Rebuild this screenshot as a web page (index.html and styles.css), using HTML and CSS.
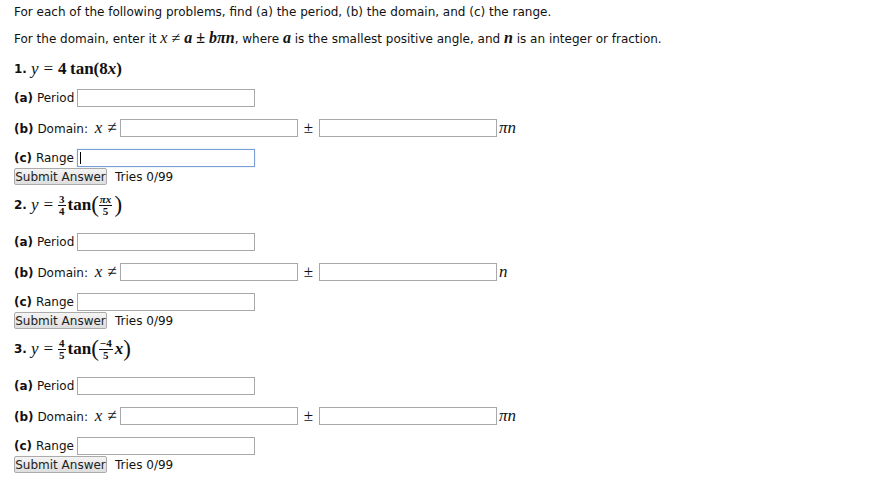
FILE: index.html
```html
<!DOCTYPE html>
<html>
<head>
  <title>Tangent Problems</title>
  <link rel="stylesheet" href="styles.css">
</head>
<body>
  <div class="page">
    <p class="intro">For each of the following problems, find (a) the period, (b) the domain, and (c) the range.</p>
    <p class="intro second">For the domain, enter it <span class="m"><i>x</i> &ne; <b><i>a</i> &plusmn; <i>b&pi;n</i></b></span>, where <span class="m"><b><i>a</i></b></span> is the smallest positive angle, and <span class="m"><b><i>n</i></b></span> is an integer or fraction.</p>

    <div class="problem">
      <div class="header first">
        <b class="num">1.</b>
        <span class="m"><i>y</i><span class="eq">=</span><b>4&thinsp;tan(8<i>x</i>)</b></span>
      </div>
      <div class="row">
        <span class="label"><b>(a)</b> Period</span>
        <input type="text" class="answer">
      </div>
      <div class="row">
        <span class="label"><b>(b)</b> Domain: <span class="m"><i>x</i><span class="ne">&ne;</span></span></span>
        <input type="text" class="answer">
        <span class="m pm">&plusmn;</span>
        <input type="text" class="answer">
        <span class="m unit"><i>&pi;n</i></span>
      </div>
      <div class="row">
        <span class="label"><b>(c)</b> Range</span>
        <input type="text" class="answer focused">
      </div>
      <div class="row submit-row">
        <button class="submit-btn">Submit Answer</button>
        <span class="tries">Tries 0/99</span>
      </div>
    </div>

    <div class="problem">
      <div class="header">
        <b class="num">2.</b>
        <span class="m"><i>y</i><span class="eq">=</span><b class="frac"><span>3</span><span>4</span></b><b>tan</b><span class="paren">(</span><b class="frac"><span><i>&pi;x</i></span><span>5</span></b><span class="paren">)</span></span>
      </div>
      <div class="row">
        <span class="label"><b>(a)</b> Period</span>
        <input type="text" class="answer">
      </div>
      <div class="row">
        <span class="label"><b>(b)</b> Domain: <span class="m"><i>x</i><span class="ne">&ne;</span></span></span>
        <input type="text" class="answer">
        <span class="m pm">&plusmn;</span>
        <input type="text" class="answer">
        <span class="m unit"><i>n</i></span>
      </div>
      <div class="row">
        <span class="label"><b>(c)</b> Range</span>
        <input type="text" class="answer">
      </div>
      <div class="row submit-row">
        <button class="submit-btn">Submit Answer</button>
        <span class="tries">Tries 0/99</span>
      </div>
    </div>

    <div class="problem">
      <div class="header">
        <b class="num">3.</b>
        <span class="m"><i>y</i><span class="eq">=</span><b class="frac"><span>4</span><span>5</span></b><b>tan</b><span class="paren">(</span><b class="frac"><span>&minus;4</span><span>5</span></b><b><i>x</i></b><span class="paren">)</span></span>
      </div>
      <div class="row">
        <span class="label"><b>(a)</b> Period</span>
        <input type="text" class="answer">
      </div>
      <div class="row">
        <span class="label"><b>(b)</b> Domain: <span class="m"><i>x</i><span class="ne">&ne;</span></span></span>
        <input type="text" class="answer">
        <span class="m pm">&plusmn;</span>
        <input type="text" class="answer">
        <span class="m unit"><i>&pi;n</i></span>
      </div>
      <div class="row">
        <span class="label"><b>(c)</b> Range</span>
        <input type="text" class="answer">
      </div>
      <div class="row submit-row">
        <button class="submit-btn">Submit Answer</button>
        <span class="tries">Tries 0/99</span>
      </div>
    </div>
  </div>
</body>
</html>
```

FILE: styles.css
```css
body {
  margin: 0;
  padding: 0;
  background-color: #fff;
  color: #111;
  font-family: "DejaVu Sans", Verdana, sans-serif;
  font-size: 12px;
}

.page {
  padding: 0 14px;
}

.intro {
  margin: 4px 0 0;
  line-height: 16px;
  white-space: nowrap;
}

.intro.second {
  margin-top: 10px;
}

.intro .m {
  font-size: 16px;
}

/* math bits */
.m {
  font-family: "Liberation Serif", "DejaVu Serif", serif;
  font-size: 16px;
  white-space: nowrap;
}

.m i {
  font-style: italic;
}

.problem {
  display: flex;
  flex-direction: column;
}

.header {
  display: flex;
  align-items: center;
  height: 24px;
  margin: 8px 0 4px;
}

.header.first {
  height: 20px;
  margin: 12px 0 -2px;
}

.header .num {
  margin-right: 4px;
}

.header .m {
  display: inline-flex;
  align-items: center;
  font-size: 17px;
}

.eq {
  margin: 0 5px;
}

.frac {
  display: inline-flex;
  flex-direction: column;
  align-items: center;
  font-size: 11px;
  line-height: 10px;
  margin: 0 2px 0 0;
}

.frac span:first-child {
  border-bottom: 1px solid #111;
  padding: 0 1px 1px;
}

.paren {
  font-size: 23px;
  line-height: 20px;
}

.row {
  display: flex;
  align-items: center;
  height: 18px;
  margin-top: 12px;
  white-space: nowrap;
}

.row .m {
  margin-left: 3px;
  font-size: 17px;
}

.ne {
  margin-left: 5px;
}

.row.submit-row {
  margin-top: 1px;
  height: 17px;
}

.answer {
  box-sizing: border-box;
  width: 178px;
  height: 18px;
  margin: 0 0 0 3px;
  padding: 1px 3px;
  border: 1px solid #a9a9a9;
  background-color: #fff;
  font-size: 12px;
}

.answer.focused {
  border-color: #7a9fd6;
  box-shadow: 0 0 1px #a8c3ea;
  background: #fff linear-gradient(#000, #000) no-repeat 2px 2px / 1px 12px;
}

.row .pm {
  margin: 0 3px 0 6px;
}

.row .unit {
  margin-left: 2px;
}

.submit-btn {
  box-sizing: border-box;
  height: 17px;
  width: 93px;
  padding: 0;
  font-family: "DejaVu Sans", Verdana, sans-serif;
  font-size: 12px;
  color: #222;
  background: linear-gradient(#f4f4f4, #dedede);
  border: 1px solid #ababab;
  border-radius: 2px;
}

.tries {
  margin-left: 8px;
}
```
